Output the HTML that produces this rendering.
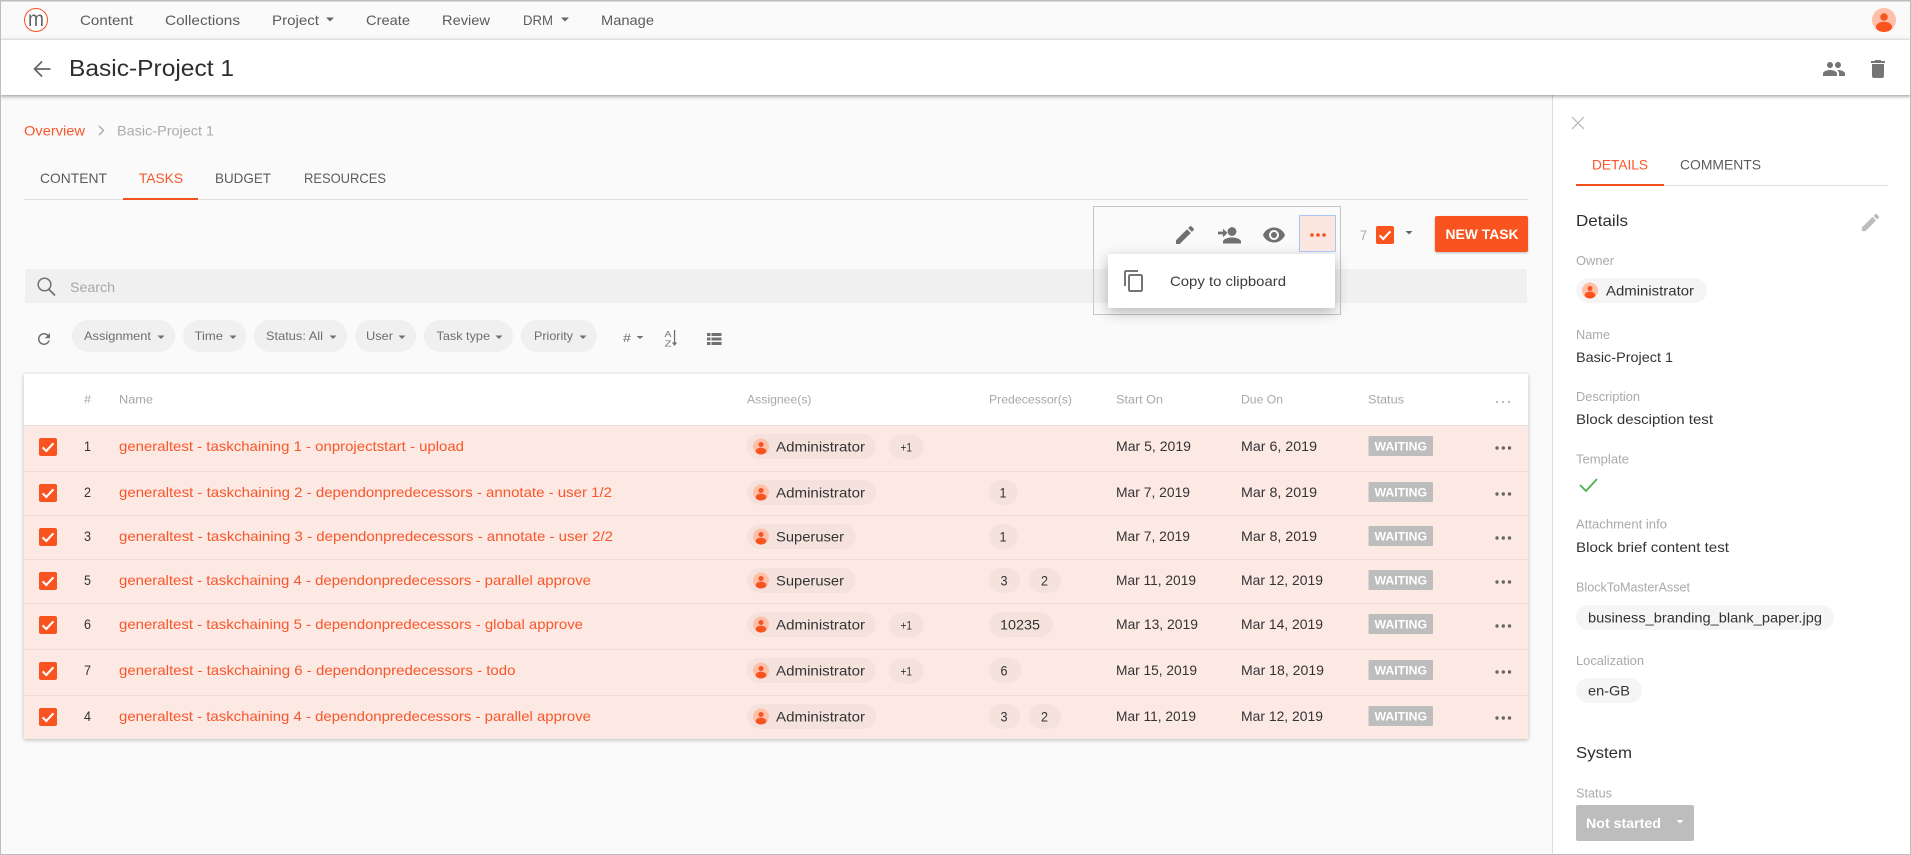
<!DOCTYPE html>
<html lang="en">
<head>
<meta charset="utf-8">
<title>Basic-Project 1</title>
<style>
html,body{margin:0;padding:0;width:1911px;height:855px;overflow:hidden;background:#fafafa}
body{position:relative;font-family:"Liberation Sans",sans-serif}
.b{position:absolute;box-sizing:border-box}
svg{position:absolute;left:0;top:0}
text{font-family:"Liberation Sans",sans-serif;font-size:14px;fill:#333}
.n{fill:#5c5c5c}
.s{font-size:12px}
.l{font-size:12.5px;fill:#aaa}
.h{font-size:12px;fill:#a8a8a8}
.o{fill:#f9562a}
.g{fill:#666}
.f{font-size:12px;fill:#6e6e6e}
.w{font-size:12px;font-weight:bold;fill:#fff}
</style>
</head>
<body>
<div class="b" style="left:0;top:0;width:1911px;height:40px;background:#fafafa"></div>
<div class="b" style="left:1552px;top:95px;width:359px;height:760px;background:#fff;border-left:1px solid #dcdcdc"></div>
<div class="b" style="left:0;top:40px;width:1911px;height:55px;background:#fff;box-shadow:0 1px 4px rgba(0,0,0,.45)"></div>
<div class="b" style="left:25px;top:269px;width:1502px;height:34px;background:#f0f0f0"></div>
<div class="b" style="left:24px;top:374px;width:1504px;height:365px;background:#fff;box-shadow:0 1px 4px rgba(0,0,0,.25)"></div>
<div class="b" style="left:1093px;top:206px;width:248px;height:109px;border:1px solid #c6c6c6"></div>
<div class="b" style="left:1108px;top:254px;width:227px;height:54px;background:#fff;border-radius:2px;box-shadow:0 4px 14px rgba(0,0,0,.28)"></div>
<div class="b" style="left:1299px;top:215px;width:37px;height:37px;background:#fbe6e0;border:1.5px solid #a9c4f5;border-radius:1px"></div>
<div class="b" style="left:1435px;top:216px;width:93px;height:36px;background:#f9541f;border-radius:2px;box-shadow:0 1px 2px rgba(0,0,0,.25)"></div>
<div class="b" style="left:1576px;top:805px;width:118px;height:36px;background:#bdbdbd;border-radius:2px"></div>

<svg width="1911" height="855" viewBox="0 0 1911 855" xmlns="http://www.w3.org/2000/svg">
<defs>
<clipPath id="c"><circle cx="12" cy="12" r="12"/></clipPath>
<symbol id="av" viewBox="0 0 24 24"><circle cx="12" cy="12" r="12" fill="#ffbfa8"/><g clip-path="url(#c)"><circle cx="12" cy="9" r="3.8" fill="#f9541f"/><ellipse cx="12" cy="19" rx="8" ry="5.3" fill="#f9541f"/></g></symbol>
<symbol id="cb" viewBox="0 0 18 18"><rect width="18" height="18" rx="2" fill="#f9541f"/><path d="M3.6 9.4 7.3 13 14.4 5.3" fill="none" stroke="#fff" stroke-width="2.1"/></symbol>
<symbol id="pen" viewBox="0 0 24 24"><path d="M3 17.25V21h3.75L17.81 9.94l-3.75-3.75L3 17.25zM20.71 7.04c.39-.39.39-1.02 0-1.41l-2.34-2.34c-.39-.39-1.02-.39-1.41 0l-1.83 1.83 3.75 3.75 1.83-1.83z"/></symbol>
</defs>

<!-- frame -->
<rect x="0" y="0" width="1911" height="1.5" fill="#bdbdbd"/>
<rect x="0" y="0" width="1" height="855" fill="#bdbdbd"/>
<rect x="1910" y="0" width="1" height="855" fill="#bdbdbd"/>
<rect x="0" y="854" width="1911" height="1" fill="#bdbdbd"/>

<!-- nav -->
<circle cx="36" cy="20" r="11.5" fill="#fff" stroke="#f4511e" stroke-width="1"/>
<text x="28" y="26" textLength="16" lengthAdjust="spacingAndGlyphs" style="font-size:21px;fill:#666">m</text>
<text class="n" x="80" y="25" textLength="53" lengthAdjust="spacingAndGlyphs">Content</text>
<text class="n" x="165" y="25" textLength="75" lengthAdjust="spacingAndGlyphs">Collections</text>
<text class="n" x="272" y="25" textLength="47" lengthAdjust="spacingAndGlyphs">Project</text>
<path d="M326 17.500h8l-4 4z" fill="#666"/>
<text class="n" x="366" y="25" textLength="44" lengthAdjust="spacingAndGlyphs">Create</text>
<text class="n" x="442" y="25" textLength="48" lengthAdjust="spacingAndGlyphs">Review</text>
<text class="n" x="523" y="25" textLength="30" lengthAdjust="spacingAndGlyphs">DRM</text>
<path d="M561 17.500h8l-4 4z" fill="#666"/>
<text class="n" x="601" y="25" textLength="53" lengthAdjust="spacingAndGlyphs">Manage</text>
<use href="#av" x="1872" y="8" width="24" height="24"/>

<!-- header -->
<path d="M50.500 69H35M42 61.500 34.500 69l7.500 7.500" fill="none" stroke="#666" stroke-width="1.700"/>
<text x="69" y="76" textLength="165" lengthAdjust="spacingAndGlyphs" style="font-size:23px;fill:#2e2e2e">Basic-Project 1</text>
<path d="M16 11c1.66 0 2.99-1.34 2.99-3S17.66 5 16 5c-1.66 0-3 1.34-3 3s1.34 3 3 3zm-8 0c1.66 0 2.99-1.34 2.99-3S9.66 5 8 5C6.34 5 5 6.34 5 8s1.34 3 3 3zm0 2c-2.33 0-7 1.17-7 3.5V19h14v-2.5c0-2.33-4.67-3.5-7-3.5zm8 0c-.29 0-.62.02-.97.05 1.16.84 1.97 1.97 1.97 3.45V19h6v-2.5c0-2.33-4.67-3.5-7-3.5z" transform="translate(1822,57)" fill="#757575"/>
<path d="M6 19c0 1.1.9 2 2 2h8c1.1 0 2-.9 2-2V7H6v12zM19 4h-3.5l-1-1h-5l-1 1H5v2h14V4z" transform="translate(1866,57)" fill="#757575"/>

<!-- breadcrumb -->
<text class="o" x="24" y="135.500" textLength="61" lengthAdjust="spacingAndGlyphs">Overview</text>
<path d="M99 126l4.500 4.500-4.500 4.500" fill="none" stroke="#aaa" stroke-width="1.400"/>
<text x="117" y="135.500" textLength="97" lengthAdjust="spacingAndGlyphs" style="fill:#ababab">Basic-Project 1</text>

<!-- tabs -->
<text class="n" x="40" y="183" textLength="67" lengthAdjust="spacingAndGlyphs">CONTENT</text>
<text class="o" x="139" y="183" textLength="44" lengthAdjust="spacingAndGlyphs">TASKS</text>
<text class="n" x="215" y="183" textLength="56" lengthAdjust="spacingAndGlyphs">BUDGET</text>
<text class="n" x="304" y="183" textLength="82" lengthAdjust="spacingAndGlyphs">RESOURCES</text>
<rect x="24" y="199" width="1504" height="1" fill="#e0e0e0"/>
<rect x="123" y="198" width="75" height="2" fill="#f4511e"/>

<!-- toolbar -->
<use href="#pen" x="1173" y="223" width="24" height="24" fill="#707070"/>
<g fill="#707070">
<circle cx="1232" cy="231.500" r="4.400"/>
<path d="M1223 243.500v-2c0-2.600 5.800-4.100 9-4.100s9 1.500 9 4.100v2z"/>
<path d="M1218 231.600h5v-2.900l4.500 4.300-4.500 4.300v-2.900h-5z"/>
</g>
<path d="M12 4.500C7 4.500 2.730 7.610 1 12c1.730 4.390 6 7.500 11 7.500s9.270-3.110 11-7.500c-1.730-4.390-6-7.500-11-7.500zM12 17c-2.760 0-5-2.240-5-5s2.240-5 5-5 5 2.240 5 5-2.240 5-5 5zm0-8c-1.660 0-3 1.340-3 3s1.340 3 3 3 3-1.340 3-3-1.340-3-3-3z" transform="translate(1262,223)" fill="#707070"/>
<g fill="#f4511e"><circle cx="1312" cy="235" r="1.800"/><circle cx="1318" cy="235" r="1.800"/><circle cx="1324" cy="235" r="1.800"/></g>
<text x="1360" y="240" textLength="7" lengthAdjust="spacingAndGlyphs" style="fill:#aaa">7</text>
<use href="#cb" x="1376" y="226" width="18" height="18"/>
<path d="M1405.500 231h7l-3.500 3.500z" fill="#666"/>
<text x="1445.500" y="239" textLength="73" lengthAdjust="spacingAndGlyphs" style="font-weight:bold;fill:#fff">NEW TASK</text>
<path d="M16 1H4c-1.100 0-2 .9-2 2v14h2V3h12V1zm3 4H8c-1.100 0-2 .9-2 2v14c0 1.100.9 2 2 2h11c1.100 0 2-.9 2-2V7c0-1.100-.9-2-2-2zm0 16H8V7h11v14z" transform="translate(1122,269)" fill="#757575"/>
<text x="1170" y="286" textLength="116" lengthAdjust="spacingAndGlyphs" style="fill:#3c3c3c">Copy to clipboard</text>

<!-- search -->
<circle cx="44.500" cy="284.500" r="6.300" fill="none" stroke="#707070" stroke-width="1.500"/>
<path d="M49 289.500l6 6" stroke="#707070" stroke-width="1.800" fill="none"/>
<text x="70" y="292" textLength="45" lengthAdjust="spacingAndGlyphs" style="fill:#a8a8a8">Search</text>

<!-- filters -->
<path d="M17.650 6.350C16.200 4.900 14.210 4 12 4c-4.420 0-7.990 3.580-7.990 8s3.570 8 7.990 8c3.730 0 6.840-2.550 7.730-6h-2.080c-.82 2.330-3.040 4-5.650 4-3.310 0-6-2.690-6-6s2.690-6 6-6c1.660 0 3.140.69 4.220 1.780L13 11h7V4l-2.350 2.350z" transform="translate(35,330) scale(.75)" fill="#707070"/>
<g fill="#f0f0f0">
<rect x="72" y="320" width="103" height="32" rx="16"/>
<rect x="183" y="320" width="63" height="32" rx="16"/>
<rect x="254" y="320" width="93" height="32" rx="16"/>
<rect x="355" y="320" width="61" height="32" rx="16"/>
<rect x="424" y="320" width="89" height="32" rx="16"/>
<rect x="521" y="320" width="76" height="32" rx="16"/>
</g>
<text class="f" x="84" y="340" textLength="67" lengthAdjust="spacingAndGlyphs">Assignment</text>
<text class="f" x="194.500" y="340" textLength="28.500" lengthAdjust="spacingAndGlyphs">Time</text>
<text class="f" x="266" y="340" textLength="57" lengthAdjust="spacingAndGlyphs">Status: All</text>
<text class="f" x="366" y="340" textLength="27" lengthAdjust="spacingAndGlyphs">User</text>
<text class="f" x="436.500" y="340" textLength="53.500" lengthAdjust="spacingAndGlyphs">Task type</text>
<text class="f" x="534" y="340" textLength="39" lengthAdjust="spacingAndGlyphs">Priority</text>
<g fill="#707070">
<path d="M157.500 335.500h7l-3.500 3.500z"/><path d="M229.500 335.500h7l-3.500 3.500z"/><path d="M329.500 335.500h7l-3.500 3.500z"/><path d="M398.500 335.500h7l-3.500 3.500z"/><path d="M495.500 335.500h7l-3.500 3.500z"/><path d="M579.500 335.500h7l-3.500 3.500z"/>
<path d="M636.500 336h7l-3.500 3z"/>
</g>
<text class="f" x="623" y="342" textLength="8" lengthAdjust="spacingAndGlyphs">#</text>
<text x="664.500" y="337" style="font-size:8px;fill:#707070" textLength="7" lengthAdjust="spacingAndGlyphs">A</text>
<text x="664.500" y="346.500" style="font-size:8px;fill:#707070" textLength="7" lengthAdjust="spacingAndGlyphs">Z</text>
<path d="M673.900 330h1.300v12.500h2l-2.650 3.500-2.650-3.500h2z" fill="#707070"/>
<g fill="#707070">
<rect x="707" y="333" width="3.500" height="3"/><rect x="711.500" y="333" width="10" height="3"/>
<rect x="707" y="337.500" width="3.500" height="3"/><rect x="711.500" y="337.500" width="10" height="3"/>
<rect x="707" y="342" width="3.500" height="3"/><rect x="711.500" y="342" width="10" height="3"/>
</g>

<!-- table header -->
<text class="h" x="84" y="403.500" textLength="7" lengthAdjust="spacingAndGlyphs">#</text>
<text class="h" x="119" y="403.500" textLength="34" lengthAdjust="spacingAndGlyphs">Name</text>
<text class="h" x="747" y="403.500" textLength="64.500" lengthAdjust="spacingAndGlyphs">Assignee(s)</text>
<text class="h" x="989" y="403.500" textLength="83" lengthAdjust="spacingAndGlyphs">Predecessor(s)</text>
<text class="h" x="1116" y="403.500" textLength="47" lengthAdjust="spacingAndGlyphs">Start On</text>
<text class="h" x="1241" y="403.500" textLength="42" lengthAdjust="spacingAndGlyphs">Due On</text>
<text class="h" x="1368" y="403.500" textLength="36" lengthAdjust="spacingAndGlyphs">Status</text>
<g fill="#bdbdbd"><circle cx="1497" cy="402" r="1.200"/><circle cx="1503" cy="402" r="1.200"/><circle cx="1509" cy="402" r="1.200"/></g>

<!-- table body -->
<rect x="24" y="425" width="1504" height="314" fill="#fde9e4"/>
<rect x="24" y="425" width="1504" height="1" fill="#e9dcd8"/>
<g fill="#f0dcd6">
<rect x="24" y="471" width="1504" height="1"/>
<rect x="24" y="515" width="1504" height="1"/>
<rect x="24" y="559" width="1504" height="1"/>
<rect x="24" y="603" width="1504" height="1"/>
<rect x="24" y="649" width="1504" height="1"/>
<rect x="24" y="695" width="1504" height="1"/>
</g>

<!-- row 1 -->
<g>
<use href="#cb" x="39" y="438" width="18" height="18"/>
<text x="84" y="451" textLength="7" lengthAdjust="spacingAndGlyphs">1</text>
<text class="o" x="119" y="451" textLength="345" lengthAdjust="spacingAndGlyphs">generaltest - taskchaining 1 - onprojectstart - upload</text>
<rect x="747" y="434" width="129" height="25" rx="12.500" fill="#f5e2dd"/>
<use href="#av" x="753" y="438.500" width="16" height="16"/>
<text x="776" y="451.500" textLength="89" lengthAdjust="spacingAndGlyphs">Administrator</text>
<rect x="889" y="434.500" width="35" height="25" rx="12.500" fill="#f5e2dd"/>
<text class="s" x="900.500" y="451.500" textLength="11.500" lengthAdjust="spacingAndGlyphs">+1</text>
<text x="1116" y="451" textLength="75" lengthAdjust="spacingAndGlyphs">Mar 5, 2019</text>
<text x="1241" y="451" textLength="76" lengthAdjust="spacingAndGlyphs">Mar 6, 2019</text>
<rect x="1368.500" y="436" width="64.500" height="20" rx="1" fill="#bdbdbd"/>
<text class="w" x="1374.500" y="450.500" textLength="52.500" lengthAdjust="spacingAndGlyphs">WAITING</text>
<g fill="#666"><circle cx="1497" cy="448" r="1.700"/><circle cx="1503.300" cy="448" r="1.700"/><circle cx="1509.500" cy="448" r="1.700"/></g>
</g>
<!-- row 2 -->
<g transform="translate(0,46)">
<use href="#cb" x="39" y="438" width="18" height="18"/>
<text x="84" y="451" textLength="7" lengthAdjust="spacingAndGlyphs">2</text>
<text class="o" x="119" y="451" textLength="493" lengthAdjust="spacingAndGlyphs">generaltest - taskchaining 2 - dependonpredecessors - annotate - user 1/2</text>
<rect x="747" y="434" width="129" height="25" rx="12.500" fill="#f5e2dd"/>
<use href="#av" x="753" y="438.500" width="16" height="16"/>
<text x="776" y="451.500" textLength="89" lengthAdjust="spacingAndGlyphs">Administrator</text>
<rect x="989" y="434" width="29" height="25" rx="12.500" fill="#f5e2dd"/>
<text x="999.500" y="451.500" textLength="7" lengthAdjust="spacingAndGlyphs">1</text>
<text x="1116" y="451" textLength="74" lengthAdjust="spacingAndGlyphs">Mar 7, 2019</text>
<text x="1241" y="451" textLength="76" lengthAdjust="spacingAndGlyphs">Mar 8, 2019</text>
<rect x="1368.500" y="436" width="64.500" height="20" rx="1" fill="#bdbdbd"/>
<text class="w" x="1374.500" y="450.500" textLength="52.500" lengthAdjust="spacingAndGlyphs">WAITING</text>
<g fill="#666"><circle cx="1497" cy="448" r="1.700"/><circle cx="1503.300" cy="448" r="1.700"/><circle cx="1509.500" cy="448" r="1.700"/></g>
</g>
<!-- row 3 -->
<g transform="translate(0,90)">
<use href="#cb" x="39" y="438" width="18" height="18"/>
<text x="84" y="451" textLength="7" lengthAdjust="spacingAndGlyphs">3</text>
<text class="o" x="119" y="451" textLength="494" lengthAdjust="spacingAndGlyphs">generaltest - taskchaining 3 - dependonpredecessors - annotate - user 2/2</text>
<rect x="747" y="434" width="108.500" height="25" rx="12.500" fill="#f5e2dd"/>
<use href="#av" x="753" y="438.500" width="16" height="16"/>
<text x="776" y="451.500" textLength="68" lengthAdjust="spacingAndGlyphs">Superuser</text>
<rect x="989" y="434" width="29" height="25" rx="12.500" fill="#f5e2dd"/>
<text x="999.500" y="451.500" textLength="7" lengthAdjust="spacingAndGlyphs">1</text>
<text x="1116" y="451" textLength="74" lengthAdjust="spacingAndGlyphs">Mar 7, 2019</text>
<text x="1241" y="451" textLength="76" lengthAdjust="spacingAndGlyphs">Mar 8, 2019</text>
<rect x="1368.500" y="436" width="64.500" height="20" rx="1" fill="#bdbdbd"/>
<text class="w" x="1374.500" y="450.500" textLength="52.500" lengthAdjust="spacingAndGlyphs">WAITING</text>
<g fill="#666"><circle cx="1497" cy="448" r="1.700"/><circle cx="1503.300" cy="448" r="1.700"/><circle cx="1509.500" cy="448" r="1.700"/></g>
</g>
<!-- row 4 -->
<g transform="translate(0,134)">
<use href="#cb" x="39" y="438" width="18" height="18"/>
<text x="84" y="451" textLength="7" lengthAdjust="spacingAndGlyphs">5</text>
<text class="o" x="119" y="451" textLength="472" lengthAdjust="spacingAndGlyphs">generaltest - taskchaining 4 - dependonpredecessors - parallel approve</text>
<rect x="747" y="434" width="108.500" height="25" rx="12.500" fill="#f5e2dd"/>
<use href="#av" x="753" y="438.500" width="16" height="16"/>
<text x="776" y="451.500" textLength="68" lengthAdjust="spacingAndGlyphs">Superuser</text>
<rect x="989" y="434" width="31" height="25" rx="12.500" fill="#f5e2dd"/>
<text x="1000.500" y="451.500" textLength="7" lengthAdjust="spacingAndGlyphs">3</text>
<rect x="1029" y="434" width="32" height="25" rx="12.500" fill="#f5e2dd"/>
<text x="1041" y="451.500" textLength="7" lengthAdjust="spacingAndGlyphs">2</text>
<text x="1116" y="451" textLength="80" lengthAdjust="spacingAndGlyphs">Mar 11, 2019</text>
<text x="1241" y="451" textLength="82" lengthAdjust="spacingAndGlyphs">Mar 12, 2019</text>
<rect x="1368.500" y="436" width="64.500" height="20" rx="1" fill="#bdbdbd"/>
<text class="w" x="1374.500" y="450.500" textLength="52.500" lengthAdjust="spacingAndGlyphs">WAITING</text>
<g fill="#666"><circle cx="1497" cy="448" r="1.700"/><circle cx="1503.300" cy="448" r="1.700"/><circle cx="1509.500" cy="448" r="1.700"/></g>
</g>
<!-- row 5 -->
<g transform="translate(0,178)">
<use href="#cb" x="39" y="438" width="18" height="18"/>
<text x="84" y="451" textLength="7" lengthAdjust="spacingAndGlyphs">6</text>
<text class="o" x="119" y="451" textLength="464" lengthAdjust="spacingAndGlyphs">generaltest - taskchaining 5 - dependonpredecessors - global approve</text>
<rect x="747" y="434" width="129" height="25" rx="12.500" fill="#f5e2dd"/>
<use href="#av" x="753" y="438.500" width="16" height="16"/>
<text x="776" y="451.500" textLength="89" lengthAdjust="spacingAndGlyphs">Administrator</text>
<rect x="889" y="434.500" width="35" height="25" rx="12.500" fill="#f5e2dd"/>
<text class="s" x="900.500" y="451.500" textLength="11.500" lengthAdjust="spacingAndGlyphs">+1</text>
<rect x="989" y="434" width="64" height="25" rx="12.500" fill="#f5e2dd"/>
<text x="1000" y="451.500" textLength="40" lengthAdjust="spacingAndGlyphs">10235</text>
<text x="1116" y="451" textLength="82" lengthAdjust="spacingAndGlyphs">Mar 13, 2019</text>
<text x="1241" y="451" textLength="82" lengthAdjust="spacingAndGlyphs">Mar 14, 2019</text>
<rect x="1368.500" y="436" width="64.500" height="20" rx="1" fill="#bdbdbd"/>
<text class="w" x="1374.500" y="450.500" textLength="52.500" lengthAdjust="spacingAndGlyphs">WAITING</text>
<g fill="#666"><circle cx="1497" cy="448" r="1.700"/><circle cx="1503.300" cy="448" r="1.700"/><circle cx="1509.500" cy="448" r="1.700"/></g>
</g>
<!-- row 6 -->
<g transform="translate(0,224)">
<use href="#cb" x="39" y="438" width="18" height="18"/>
<text x="84" y="451" textLength="7" lengthAdjust="spacingAndGlyphs">7</text>
<text class="o" x="119" y="451" textLength="396.500" lengthAdjust="spacingAndGlyphs">generaltest - taskchaining 6 - dependonpredecessors - todo</text>
<rect x="747" y="434" width="129" height="25" rx="12.500" fill="#f5e2dd"/>
<use href="#av" x="753" y="438.500" width="16" height="16"/>
<text x="776" y="451.500" textLength="89" lengthAdjust="spacingAndGlyphs">Administrator</text>
<rect x="889" y="434.500" width="35" height="25" rx="12.500" fill="#f5e2dd"/>
<text class="s" x="900.500" y="451.500" textLength="11.500" lengthAdjust="spacingAndGlyphs">+1</text>
<rect x="989" y="434" width="32" height="25" rx="12.500" fill="#f5e2dd"/>
<text x="1000.500" y="451.500" textLength="7" lengthAdjust="spacingAndGlyphs">6</text>
<text x="1116" y="451" textLength="81" lengthAdjust="spacingAndGlyphs">Mar 15, 2019</text>
<text x="1241" y="451" textLength="83" lengthAdjust="spacingAndGlyphs">Mar 18, 2019</text>
<rect x="1368.500" y="436" width="64.500" height="20" rx="1" fill="#bdbdbd"/>
<text class="w" x="1374.500" y="450.500" textLength="52.500" lengthAdjust="spacingAndGlyphs">WAITING</text>
<g fill="#666"><circle cx="1497" cy="448" r="1.700"/><circle cx="1503.300" cy="448" r="1.700"/><circle cx="1509.500" cy="448" r="1.700"/></g>
</g>
<!-- row 7 -->
<g transform="translate(0,270)">
<use href="#cb" x="39" y="438" width="18" height="18"/>
<text x="84" y="451" textLength="7" lengthAdjust="spacingAndGlyphs">4</text>
<text class="o" x="119" y="451" textLength="472" lengthAdjust="spacingAndGlyphs">generaltest - taskchaining 4 - dependonpredecessors - parallel approve</text>
<rect x="747" y="434" width="129" height="25" rx="12.500" fill="#f5e2dd"/>
<use href="#av" x="753" y="438.500" width="16" height="16"/>
<text x="776" y="451.500" textLength="89" lengthAdjust="spacingAndGlyphs">Administrator</text>
<rect x="989" y="434" width="31" height="25" rx="12.500" fill="#f5e2dd"/>
<text x="1000.500" y="451.500" textLength="7" lengthAdjust="spacingAndGlyphs">3</text>
<rect x="1029" y="434" width="32" height="25" rx="12.500" fill="#f5e2dd"/>
<text x="1041" y="451.500" textLength="7" lengthAdjust="spacingAndGlyphs">2</text>
<text x="1116" y="451" textLength="80" lengthAdjust="spacingAndGlyphs">Mar 11, 2019</text>
<text x="1241" y="451" textLength="82" lengthAdjust="spacingAndGlyphs">Mar 12, 2019</text>
<rect x="1368.500" y="436" width="64.500" height="20" rx="1" fill="#bdbdbd"/>
<text class="w" x="1374.500" y="450.500" textLength="52.500" lengthAdjust="spacingAndGlyphs">WAITING</text>
<g fill="#666"><circle cx="1497" cy="448" r="1.700"/><circle cx="1503.300" cy="448" r="1.700"/><circle cx="1509.500" cy="448" r="1.700"/></g>
</g>

<!-- right panel -->
<path d="M1572 117l12 12M1584 117l-12 12" stroke="#b5b5b5" stroke-width="1.200" fill="none"/>
<text class="o" x="1592" y="169.500" textLength="56" lengthAdjust="spacingAndGlyphs">DETAILS</text>
<text class="n" x="1680" y="169.500" textLength="81" lengthAdjust="spacingAndGlyphs">COMMENTS</text>
<rect x="1576" y="185" width="312" height="1" fill="#e0e0e0"/>
<rect x="1576" y="184" width="88" height="2" fill="#f4511e"/>
<text x="1576" y="226" textLength="52" lengthAdjust="spacingAndGlyphs" style="font-size:16px;fill:#2e2e2e">Details</text>
<use href="#pen" x="1859" y="211" width="23" height="23" fill="#bdbdbd"/>
<text class="l" x="1576" y="265" textLength="38" lengthAdjust="spacingAndGlyphs">Owner</text>
<rect x="1576" y="278" width="131" height="25" rx="12.500" fill="#f5f5f5"/>
<use href="#av" x="1582" y="282.500" width="16" height="16"/>
<text x="1606" y="295.500" textLength="88" lengthAdjust="spacingAndGlyphs">Administrator</text>
<text class="l" x="1576" y="339" textLength="34" lengthAdjust="spacingAndGlyphs">Name</text>
<text x="1576" y="362" textLength="97" lengthAdjust="spacingAndGlyphs">Basic-Project 1</text>
<text class="l" x="1576" y="401" textLength="64" lengthAdjust="spacingAndGlyphs">Description</text>
<text x="1576" y="424" textLength="137" lengthAdjust="spacingAndGlyphs">Block desciption test</text>
<text class="l" x="1576" y="463.500" textLength="53" lengthAdjust="spacingAndGlyphs">Template</text>
<path d="M1580 485l6 6 11-12" fill="none" stroke="#4caf50" stroke-width="1.800"/>
<text class="l" x="1576" y="528.500" textLength="91" lengthAdjust="spacingAndGlyphs">Attachment info</text>
<text x="1576" y="552" textLength="153" lengthAdjust="spacingAndGlyphs">Block brief content test</text>
<text class="l" x="1576" y="591.500" textLength="114" lengthAdjust="spacingAndGlyphs">BlockToMasterAsset</text>
<rect x="1576" y="605" width="258" height="25" rx="12.500" fill="#f5f5f5"/>
<text x="1588" y="622.500" textLength="234" lengthAdjust="spacingAndGlyphs">business_branding_blank_paper.jpg</text>
<text class="l" x="1576" y="665" textLength="68" lengthAdjust="spacingAndGlyphs">Localization</text>
<rect x="1576" y="678" width="66" height="25" rx="12.500" fill="#f5f5f5"/>
<text x="1588" y="695.500" textLength="42" lengthAdjust="spacingAndGlyphs">en-GB</text>
<text x="1576" y="758" textLength="56" lengthAdjust="spacingAndGlyphs" style="font-size:16px;fill:#2e2e2e">System</text>
<text class="l" x="1576" y="797.500" textLength="36" lengthAdjust="spacingAndGlyphs">Status</text>
<text x="1586" y="828" textLength="75" lengthAdjust="spacingAndGlyphs" style="font-weight:bold;fill:#fff">Not started</text>
<path d="M1676.500 820h7l-3.500 3.500z" fill="#fff"/>
</svg>
</body>
</html>
